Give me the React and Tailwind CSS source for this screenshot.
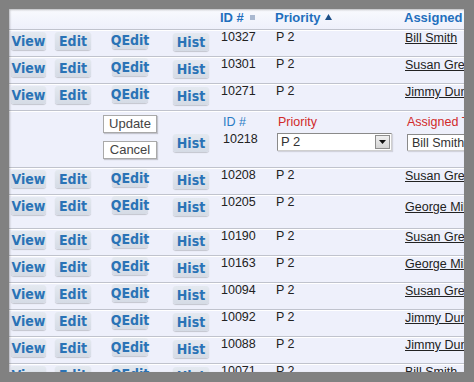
const rows = [
  { id: "10327", name: "Bill Smith" },
  { id: "10301", name: "Susan Greene" },
  { id: "10271", name: "Jimmy Dunn" },
  { edit: true, id: "10218" },
  { id: "10208", name: "Susan Greene" },
  { id: "10205", name: "George Miller", tall: true },
  { id: "10190", name: "Susan Greene" },
  { id: "10163", name: "George Miller" },
  { id: "10094", name: "Susan Greene" },
  { id: "10092", name: "Jimmy Dunn" },
  { id: "10088", name: "Jimmy Dunn" },
  { id: "10071", name: "Bill Smith" },
];

const btn =
  "flex h-[18px] w-[36px] items-center justify-center rounded-[3px] bg-gradient-to-b from-[#e4e9f0] to-[#d5dbe5] text-[14px] leading-[16px] font-bold text-[#2a73b6] shadow-[0_1px_1px_rgba(0,0,0,0.18)] [font-family:'DejaVu_Sans_Condensed','DejaVu_Sans',sans-serif] [font-stretch:condensed]";

const grid = "grid grid-cols-[43px_53px_63px_48px_55px_129px_1fr]";
const sans = "[font-family:'Liberation_Sans',Arial,sans-serif]";
const line = "border-t border-[#c0c3cd] shadow-[inset_0_1px_0_#ffffff]";

function DataRow({ r }) {
  return (
    <div className={`${grid} ${line} ${r.tall ? "h-[34px]" : "h-[27px]"}`}>
      <div className="pl-[2px] pt-[2px]">
        <span className={`${btn} !w-[35px]`}>View</span>
      </div>
      <div className="pl-[3px] pt-[2px]">
        <span className={btn}>Edit</span>
      </div>
      <div className="pl-[7px] pt-[1px]">
        <span className={btn}>QEdit</span>
      </div>
      <div className="pl-[5px] pt-[3px]">
        <span className={btn}>Hist</span>
      </div>
      <div className={`pl-[5px] text-[12.5px] leading-[14px] text-[#222] ${sans}`}>{r.id}</div>
      <div className={`pl-[5px] text-[12.5px] leading-[14px] text-[#222] ${sans}`}>P 2</div>
      <div
        className={`whitespace-nowrap pl-[5px] text-[12.5px] leading-[14px] text-[#222] underline ${sans} ${
          r.tall ? "pt-[5px]" : "pt-[1px]"
        }`}
      >
        {r.name}
      </div>
    </div>
  );
}

function EditRow({ r }) {
  const btn2 =
    "flex h-[18px] w-[54px] items-center justify-center border border-[#a9a9a9] bg-white text-[13px] text-[#444] shadow-[1px_1px_1px_rgba(0,0,0,0.18)] " +
    sans;
  return (
    <div className={`${grid} ${line} h-[57px]`}>
      <div className="col-span-3 flex flex-col pl-[94px] pt-[4px]">
        <span className={btn2}>Update</span>
        <span className={`${btn2} mt-[8px]`}>Cancel</span>
      </div>
      <div className="pl-[5px] pt-[23px]">
        <span className={btn}>Hist</span>
      </div>
      <div className={`pl-[7px] pt-[4px] text-[12.5px] leading-[14px] ${sans}`}>
        <div className="text-[#2a7cc4]">ID #</div>
        <div className="mt-[3px] text-[#222]">{r.id}</div>
      </div>
      <div className={`pl-[6px] pt-[4px] text-[12.5px] leading-[14px] ${sans}`}>
        <div className="pl-[1px] text-[#d12a2a]">Priority</div>
        <div className="mt-[4px] flex h-[18px] w-[115px] items-center justify-between border border-[#8a8a8a] border-b-[#cfcfcf] border-r-[#cfcfcf] bg-white pl-[3px] pr-[1px] shadow-[1px_1px_1px_rgba(0,0,0,0.12)]">
          <span className="text-[13px] text-[#333]">P 2</span>
          <span className="flex h-[14px] w-[15px] items-center justify-center border border-[#8d8d8d] bg-gradient-to-b from-[#f0f0f0] to-[#d4d4d4]">
            <svg width="7" height="4" viewBox="0 0 7 4">
              <path d="M0 0h7L3.5 4z" fill="#111" />
            </svg>
          </span>
        </div>
      </div>
      <div className={`whitespace-nowrap pl-[7px] pt-[4px] text-[12.5px] leading-[14px] ${sans}`}>
        <div className="text-[#d12a2a]">Assigned To</div>
        <div className="mt-[5px] flex h-[17px] w-[90px] items-center border border-[#8a8a8a] border-b-[#cfcfcf] border-r-[#cfcfcf] bg-white pl-[4px] shadow-[1px_1px_1px_rgba(0,0,0,0.12)]">
          <span className="text-[12.5px] text-[#333]">Bill Smith</span>
        </div>
      </div>
    </div>
  );
}

export default function App() {
  return (
    <div className="h-[382px] w-[474px] bg-[#818181] pb-[10px] pl-[9px] pr-[10px] pt-[9px]">
      <div className="relative h-full w-full overflow-hidden bg-[#eef0fb]">
        <div
          className={`${grid} h-[20px] bg-gradient-to-b from-[#f9fafe] to-[#eef0fb] text-[13px] font-bold leading-[15px] text-[#1f6fbd] ${sans}`}
        >
          <div className="col-span-4" />
          <div className="flex items-start pl-[4px] pt-[1px]">
            <span>ID #</span>
            <span className="ml-[6px] mt-[5px] h-[5px] w-[5px] bg-[#a9b8d0]" />
          </div>
          <div className="flex items-start pl-[4px] pt-[1px]">
            <span>Priority</span>
            <svg className="ml-[4px] mt-[4px]" width="7" height="6" viewBox="0 0 7 6">
              <path d="M3.5 0L7 6H0z" fill="#1c4f87" />
            </svg>
          </div>
          <div className="whitespace-nowrap pl-[4px] pt-[1px]">Assigned To</div>
        </div>
        {rows.map((r) => (r.edit ? <EditRow key={r.id} r={r} /> : <DataRow key={r.id} r={r} />))}
        <div className="pointer-events-none absolute inset-0 shadow-[inset_1px_1px_2px_rgba(0,0,0,0.25)]" />
      </div>
    </div>
  );
}
